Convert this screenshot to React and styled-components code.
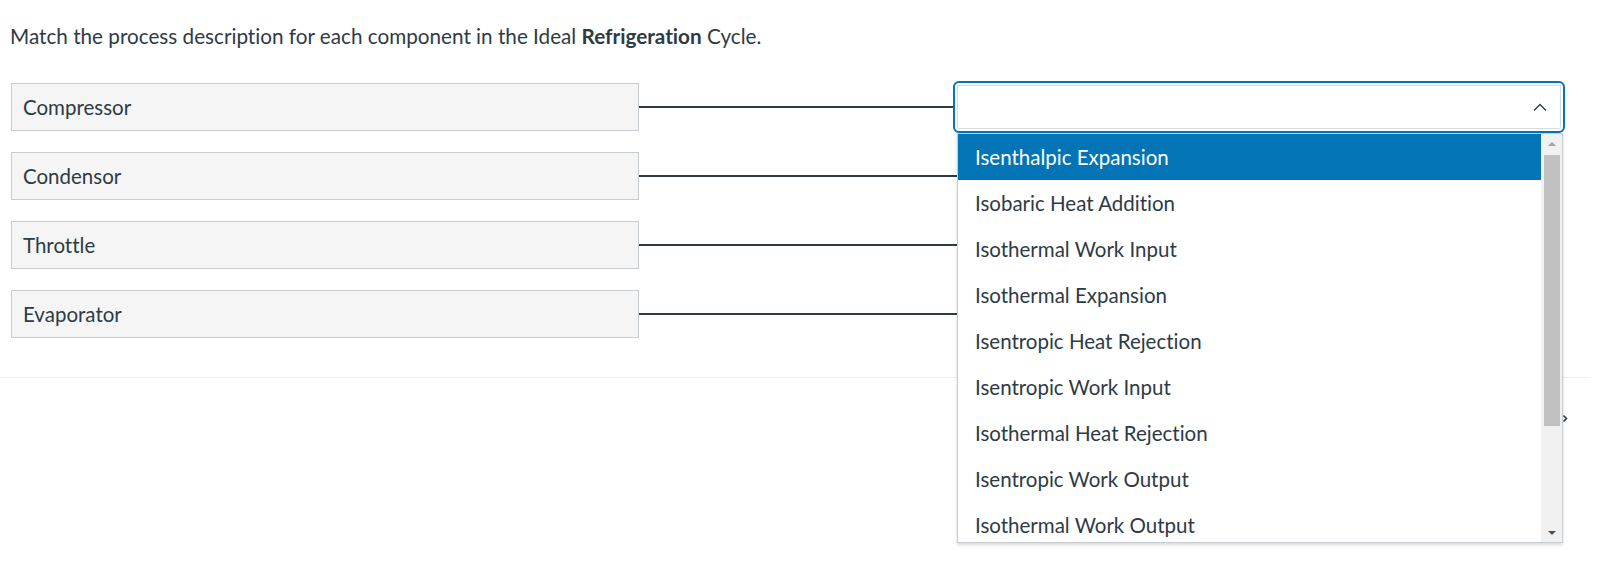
import React from 'react';
import styled, { createGlobalStyle } from 'styled-components';

const GlobalStyle = createGlobalStyle`
    body {
        margin: 0;
        background: #FFFFFF;
        font-family: Lato, "Open Sans", sans-serif;
        font-variant-ligatures: none;
        color: #2D3B45;
    }
`

const Page = styled.div`
    width: 1590px;
    min-height: 567px;
    position: relative;
`

const Content = styled.div`
    padding: 22px 25px 0 11px;
`

const Prompt = styled.p`
    margin: 0 0 0 -1px;
    font-size: 20.7px;
    line-height: 28px;
    color: #2D3B45;

    strong {
        font-weight: 700;
    }
`

const Rows = styled.div`
    margin-top: 31px;
    display: flex;
    flex-direction: column;
    gap: 17px;
`

const Row = styled.div`
    display: grid;
    grid-template-columns: 628px 1fr 612px;
    align-items: center;
    height: 52px;
`

const Label = styled.div`
    height: 48px;
    box-sizing: border-box;
    display: flex;
    align-items: center;
    padding: 0 11px;
    background: #F5F5F5;
    border: 1px solid #C7CDD1;
    font-size: 20.5px;
    color: #2D3B45;
`

const Connector = styled.div`
    height: 2px;
    margin-right: -4px;
    background: #2D3B45;
`

const Select = styled.div`
    position: relative;
    z-index: 1;
    height: 52px;
    box-sizing: border-box;
    border: 2px solid #0374B5;
    border-radius: 6px;
    background: #FFFFFF;
    box-shadow: inset 0 0 0 2px #FFFFFF, inset 0 0 0 3px #D7DCDF;
    display: flex;
    align-items: center;
    justify-content: flex-end;
    padding-right: 16px;
`

const Slot = styled.div`
    height: 52px;
`

const Menu = styled.div`
    position: absolute;
    top: 50px;
    left: 2px;
    width: 606px;
    height: 410px;
    box-sizing: border-box;
    background: #FFFFFF;
    border: 1px solid #C7CDD1;
    box-shadow: 0 2px 3px rgba(0, 0, 0, 0.15);
    display: flex;
    z-index: 2;
`

const Options = styled.ul`
    flex: 1;
    margin: 0;
    padding: 0;
    list-style: none;
    overflow: hidden;
`

const Option = styled.li`
    height: 46px;
    display: flex;
    align-items: center;
    padding-left: 17px;
    font-size: 20.5px;
    color: ${p => (p.$active ? '#FFFFFF' : '#2D3B45')};
    background: ${p => (p.$active ? '#0374B5' : 'transparent')};
`

const Scrollbar = styled.div`
    width: 21px;
    background: #F1F1F1;
    display: flex;
    flex-direction: column;
    align-items: center;
`

const Arrow = styled.div`
    width: 0;
    height: 0;
    border-left: 4px solid transparent;
    border-right: 4px solid transparent;
    ${p => (p.$down
        ? 'margin: 8px 0 7px; border-top: 4px solid #505050;'
        : 'margin: 8px 0 9px; border-bottom: 4px solid #A3A3A3;')}
`

const Thumb = styled.div`
    width: 16px;
    height: 271px;
    background: #C1C1C1;
`

const Spacer = styled.div`
    flex: 1;
`

const Divider = styled.div`
    margin-top: 37px;
    height: 1px;
    background: #EEEEEE;
`

const Footer = styled.div`
    display: flex;
    justify-content: flex-end;
    padding: 36px 22px 0 0;
`

const components = ['Compressor', 'Condensor', 'Throttle', 'Evaporator'];

const options = [
    'Isenthalpic Expansion',
    'Isobaric Heat Addition',
    'Isothermal Work Input',
    'Isothermal Expansion',
    'Isentropic Heat Rejection',
    'Isentropic Work Input',
    'Isothermal Heat Rejection',
    'Isentropic Work Output',
    'Isothermal Work Output',
];

const ChevronUp = () => (
    <svg width="14" height="8" viewBox="0 0 14 8">
        <polyline points="1,7.5 7,1.5 13,7.5" fill="none" stroke="#2D3B45" strokeWidth="1.4" />
    </svg>
);

const ChevronRight = () => (
    <svg width="6" height="9" viewBox="0 0 6 9">
        <polyline points="1.5,1.5 4.5,4.5 1.5,7.5" fill="none" stroke="#2D3B45" strokeWidth="1.6" />
    </svg>
);

const App = () => {
    return (
        <Page>
            <GlobalStyle />
            <Content>
                <Prompt>
                    Match the process description for each component in the Ideal <strong>Refrigeration</strong> Cycle.
                </Prompt>
                <Rows>
                    {components.map((name, i) => (
                        <Row key={name}>
                            <Label>{name}</Label>
                            <Connector />
                            {i === 0 ? (
                                <Select>
                                    <ChevronUp />
                                    <Menu>
                                        <Options>
                                            {options.map((opt, j) => (
                                                <Option key={opt} $active={j === 0}>{opt}</Option>
                                            ))}
                                        </Options>
                                        <Scrollbar>
                                            <Arrow />
                                            <Thumb />
                                            <Spacer />
                                            <Arrow $down />
                                        </Scrollbar>
                                    </Menu>
                                </Select>
                            ) : (
                                <Slot />
                            )}
                        </Row>
                    ))}
                </Rows>
            </Content>
            <Divider />
            <Footer>
                <ChevronRight />
            </Footer>
        </Page>
    )
}

export default App
